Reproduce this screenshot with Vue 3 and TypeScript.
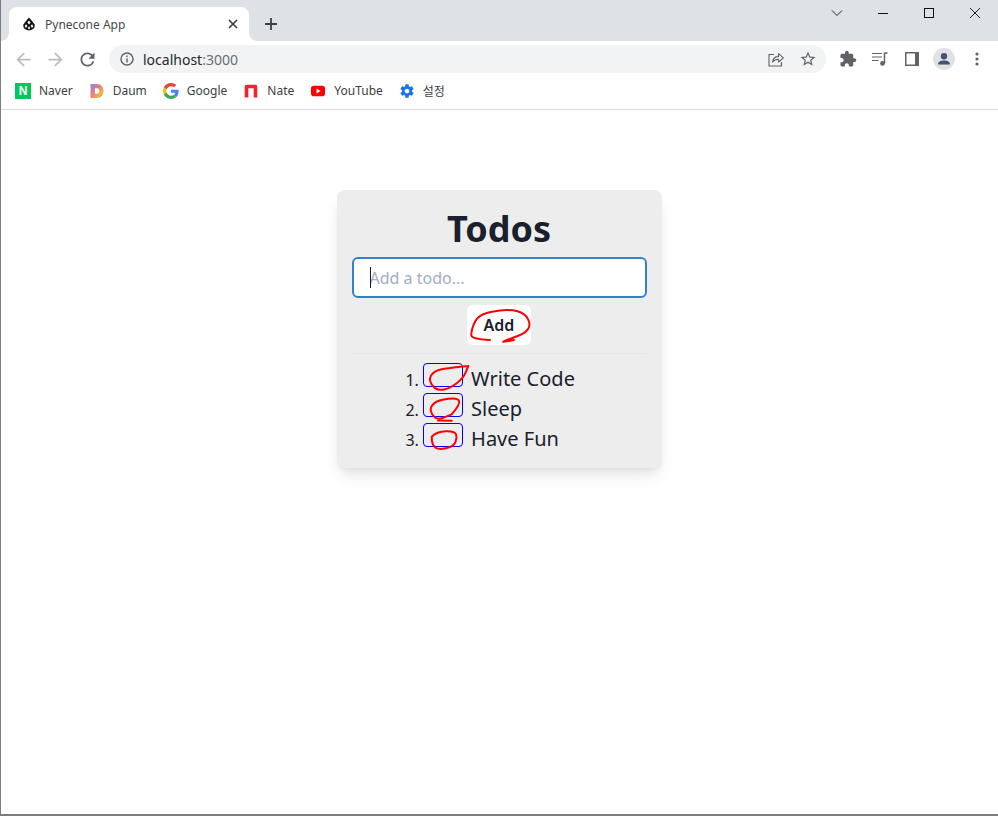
<script setup lang="ts">
type Pt = [number, number]

function smooth(points: Pt[]): string {
  let d = `M${points[0][0]} ${points[0][1]}`
  for (let i = 1; i < points.length - 1; i++) {
    const [x, y] = points[i]
    const [nx, ny] = points[i + 1]
    d += ` Q${x} ${y} ${(x + nx) / 2} ${(y + ny) / 2}`
  }
  const last = points[points.length - 1]
  return `${d} L${last[0]} ${last[1]}`
}

const scribbles: string[] = [
  smooth([[490, 340], [471.7, 339], [471, 331.7], [476.7, 316.7], [490, 311.7], [510, 309.3], [525, 313.3], [531, 325], [525, 333.3], [511.7, 338.3], [500, 342.7], [514, 340]]),
  smooth([[468.3, 366], [451.7, 367.7], [436.7, 370], [429.3, 376.7], [431, 385], [438.3, 390.7], [450, 388.3], [463.3, 378.3], [468.3, 366]]),
  smooth([[438, 420.5], [451.7, 420.7]]),
  smooth([[451.7, 414.3], [460, 405], [458.3, 397.7], [438.3, 400], [430, 406.7], [431.7, 415], [438.3, 420], [451.7, 414.3]]),
  smooth([[431.7, 436.7], [436.7, 431.7], [455, 431], [457.3, 438.3], [453.3, 446.7], [438.3, 450], [432.3, 445], [431.7, 436.7]]),
]

const todos: string[] = ['Write Code', 'Sleep', 'Have Fun']
</script>

<template>
  <div class="window">
    <header class="tabstrip">
      <div class="tab">
        <svg class="favicon" width="14" height="14" viewBox="0 0 14 14">
          <path d="M7 0.5 L10 4 L12.6 7.6 Q13.6 12.8 7 13.5 Q0.4 12.8 1.4 7.6 L4 4 Z" fill="#111" />
          <path d="M7 3.4 L8.6 5.6 L7 7.4 L5.4 5.6 Z M3.8 7.2 L5.4 8.8 L4 11 L2.8 9.4 Z M10.2 7.2 L11.2 9.4 L10 11 L8.6 8.8 Z M7 9.2 L8.2 11 L7 12.4 L5.8 11 Z" fill="#fff" />
        </svg>
        <span class="tab-title">Pynecone App</span>
        <svg class="tab-close" width="10" height="10" viewBox="0 0 10 10">
          <path d="M1 1 L9 9 M9 1 L1 9" stroke="#3c4043" stroke-width="1.7" />
        </svg>
      </div>
      <svg class="newtab" width="14" height="14" viewBox="0 0 14 14">
        <path d="M7 1 V13 M1 7 H13" stroke="#3c4043" stroke-width="1.8" />
      </svg>
      <div class="window-controls">
        <svg width="12" height="12" viewBox="0 0 12 12"><path d="M1 3.5 L6 8.5 L11 3.5" fill="none" stroke="#222" /></svg>
        <svg width="12" height="12" viewBox="0 0 12 12"><path d="M1 6.5 H11" stroke="#111" /></svg>
        <svg width="12" height="12" viewBox="0 0 12 12"><rect x="1.5" y="1.5" width="9" height="9" fill="none" stroke="#111" /></svg>
        <svg width="12" height="12" viewBox="0 0 12 12"><path d="M1 1 L11 11 M11 1 L1 11" stroke="#222" /></svg>
      </div>
    </header>

    <nav class="toolbar">
      <div class="nav-buttons">
        <svg width="21" height="21" viewBox="0 0 24 24"><path fill="#babcbe" d="M20 11H7.83l5.59-5.59L12 4l-8 8 8 8 1.41-1.41L7.83 13H20v-2z" /></svg>
        <svg width="21" height="21" viewBox="0 0 24 24"><path fill="#babcbe" d="M4 11h12.17l-5.59-5.59L12 4l8 8-8 8-1.41-1.41L16.17 13H4v-2z" /></svg>
        <svg width="21" height="21" viewBox="0 0 24 24"><path fill="#5f6368" d="M17.65 6.35A7.958 7.958 0 0 0 12 4c-4.42 0-7.99 3.58-7.99 8s3.57 8 7.99 8c3.73 0 6.84-2.55 7.73-6h-2.08A5.99 5.99 0 0 1 12 18c-3.31 0-6-2.69-6-6s2.69-6 6-6c1.66 0 3.14.69 4.22 1.78L13 11h7V4l-2.35 2.35z" /></svg>
      </div>
      <div class="omnibox">
        <svg width="14" height="14" viewBox="0 0 14 14">
          <circle cx="7" cy="7" r="6" fill="none" stroke="#5f6368" stroke-width="1.4" />
          <path d="M7 6.2 V10.4 M7 3.6 V5" stroke="#5f6368" stroke-width="1.4" />
        </svg>
        <span class="url"><span class="host">localhost</span>:3000</span>
        <svg class="omni-share" width="16" height="16" viewBox="0 0 16 16">
          <path d="M6 3.5 H1 V15 H13.5 V11" fill="none" stroke="#5f6368" stroke-width="1.1" />
          <path d="M4.5 11 C5 7.5 7.5 5.6 10.5 5.6 V2.6 L15.4 6.9 L10.5 11 V8.2 C8 8.2 6 9 4.5 11 Z" fill="none" stroke="#5f6368" stroke-width="1.1" stroke-linejoin="round" />
        </svg>
        <svg class="omni-star" width="18" height="18" viewBox="0 0 24 24"><path fill="#5f6368" d="M22 9.24l-7.19-.62L12 2 9.19 8.63 2 9.24l5.46 4.73L5.82 21 12 17.27 18.18 21l-1.63-7.03L22 9.24zM12 15.4l-3.76 2.27 1-4.28-3.32-2.88 4.38-.38L12 6.1l1.71 4.04 4.38.38-3.32 2.88 1 4.28L12 15.4z" /></svg>
      </div>
      <div class="actions">
        <svg width="18" height="18" viewBox="0 0 24 24"><path fill="#5f6368" d="M20.5 11H19V7c0-1.1-.9-2-2-2h-4V3.5C13 2.12 11.88 1 10.5 1S8 2.12 8 3.5V5H4c-1.1 0-1.99.9-1.99 2v3.8H3.5c1.49 0 2.7 1.21 2.7 2.7s-1.21 2.7-2.7 2.7H2V20c0 1.1.9 2 2 2h3.8v-1.5c0-1.49 1.21-2.7 2.7-2.7 1.49 0 2.7 1.21 2.7 2.7V22H17c1.1 0 2-.9 2-2v-4h1.5c1.38 0 2.5-1.12 2.5-2.5S21.88 11 20.5 11z" /></svg>
        <svg width="18" height="18" viewBox="0 0 18 18">
          <path d="M1 3.5 H11 M1 7 H11 M1 10.5 H7.5" stroke="#5f6368" stroke-width="1.2" />
          <path d="M13.5 3 H16.5 M13.5 2.6 V13" stroke="#5f6368" stroke-width="1.5" fill="none" />
          <circle cx="11.5" cy="13.4" r="2.3" fill="#5f6368" />
        </svg>
        <svg width="18" height="18" viewBox="0 0 18 18">
          <rect x="2" y="2" width="14" height="14" fill="#5f6368" />
          <rect x="3.5" y="3.5" width="8.5" height="11" fill="#fff" />
        </svg>
        <svg width="22" height="22" viewBox="0 0 22 22">
          <circle cx="11" cy="11" r="11" fill="#dee1e6" />
          <circle cx="11" cy="8.2" r="3.2" fill="#46536e" />
          <path d="M5 16.5 C5 13.6 8 12.6 11 12.6 C14 12.6 17 13.6 17 16.5 Z" fill="#46536e" />
        </svg>
        <svg width="18" height="18" viewBox="0 0 18 18">
          <circle cx="9" cy="4" r="1.6" fill="#5f6368" />
          <circle cx="9" cy="9" r="1.6" fill="#5f6368" />
          <circle cx="9" cy="14" r="1.6" fill="#5f6368" />
        </svg>
      </div>
    </nav>

    <div class="bookmarks">
      <div class="bookmark">
        <svg width="16" height="16" viewBox="0 0 16 16">
          <rect width="16" height="16" fill="#03c75a" />
          <text x="8" y="12.4" text-anchor="middle" class="naver-n">N</text>
        </svg>
        <span>Naver</span>
      </div>
      <div class="bookmark">
        <svg width="16" height="16" viewBox="0 0 16 16">
          <defs>
            <linearGradient id="daum" x1="0" y1="0" x2="1" y2="1">
              <stop offset="0" stop-color="#7a8cf0" />
              <stop offset="0.45" stop-color="#f27c7c" />
              <stop offset="0.75" stop-color="#f9b43c" />
              <stop offset="1" stop-color="#43b5e8" />
            </linearGradient>
          </defs>
          <path fill-rule="evenodd" fill="url(#daum)" d="M1.5 1 H8 C12 1 14.5 4 14.5 8 C14.5 12 12 15 8 15 H1.5 Z M6 5.2 V10.8 H8 C9.8 10.8 10.4 9.4 10.4 8 C10.4 6.6 9.8 5.2 8 5.2 Z" />
        </svg>
        <span>Daum</span>
      </div>
      <div class="bookmark">
        <svg width="16" height="16" viewBox="0 0 48 48">
          <path fill="#EA4335" d="M24 9.5c3.54 0 6.71 1.22 9.21 3.6l6.85-6.85C35.9 2.38 30.47 0 24 0 14.62 0 6.51 5.38 2.56 13.22l7.98 6.19C12.43 13.72 17.74 9.5 24 9.5z" />
          <path fill="#4285F4" d="M46.98 24.55c0-1.57-.15-3.09-.38-4.55H24v9.02h12.94c-.58 2.96-2.26 5.48-4.78 7.18l7.73 6c4.51-4.18 7.09-10.36 7.09-17.65z" />
          <path fill="#FBBC05" d="M10.53 28.59c-.48-1.45-.76-2.99-.76-4.59s.27-3.14.76-4.59l-7.98-6.19C.92 16.46 0 20.12 0 24c0 3.88.92 7.54 2.56 10.78l7.97-6.19z" />
          <path fill="#34A853" d="M24 48c6.48 0 11.93-2.13 15.89-5.81l-7.73-6c-2.15 1.45-4.92 2.3-8.16 2.3-6.26 0-11.57-4.22-13.47-9.91l-7.98 6.19C6.51 42.62 14.62 48 24 48z" />
        </svg>
        <span>Google</span>
      </div>
      <div class="bookmark">
        <svg width="16" height="16" viewBox="0 0 16 16">
          <path d="M3.5 14.5 V3.5 H12.5 V14.5" fill="none" stroke="#f8212b" stroke-width="3.6" stroke-linejoin="round" />
        </svg>
        <span>Nate</span>
      </div>
      <div class="bookmark">
        <svg width="16" height="16" viewBox="0 0 16 16">
          <rect x="1" y="2.8" width="14" height="10.4" rx="2.8" fill="#f00" />
          <path d="M6.5 5.6 L10.6 8 L6.5 10.4 Z" fill="#fff" />
        </svg>
        <span>YouTube</span>
      </div>
      <div class="bookmark">
        <svg width="16" height="16" viewBox="0 0 24 24"><path fill="#1a73e8" d="M19.43 12.98c.04-.32.07-.64.07-.98s-.03-.66-.07-.98l2.11-1.65c.19-.15.24-.42.12-.64l-2-3.46c-.12-.22-.39-.3-.61-.22l-2.49 1c-.52-.4-1.08-.73-1.69-.98l-.38-2.65A.488.488 0 0 0 14 2h-4c-.25 0-.46.18-.49.42l-.38 2.65c-.61.25-1.17.59-1.69.98l-2.49-1c-.23-.09-.49 0-.61.22l-2 3.46c-.13.22-.07.49.12.64l2.11 1.65c-.04.32-.07.65-.07.98s.03.66.07.98l-2.11 1.65c-.19.15-.24.42-.12.64l2 3.46c.12.22.39.3.61.22l2.49-1c.52.4 1.08.73 1.69.98l.38 2.65c.03.24.24.42.49.42h4c.25 0 .46-.18.49-.42l.38-2.65c.61-.25 1.17-.59 1.69-.98l2.49 1c.23.09.49 0 .61-.22l2-3.46c.12-.22.07-.49-.12-.64l-2.11-1.65zM12 15.5c-1.93 0-3.5-1.57-3.5-3.5s1.57-3.5 3.5-3.5 3.5 1.57 3.5 3.5-1.57 3.5-3.5 3.5z" /></svg>
        <span>설정</span>
      </div>
    </div>

    <main class="page">
      <section class="card">
        <h1 class="title">Todos</h1>
        <div class="input-wrap">
          <input class="todo-input" type="text" placeholder="Add a todo..." />
          <span class="caret"></span>
        </div>
        <button class="add-btn" type="button">Add</button>
        <hr class="divider" />
        <ol class="list">
          <li v-for="todo in todos" :key="todo" class="item">
            <button class="check" type="button"></button><span class="todo-text">{{ todo }}</span>
          </li>
        </ol>
        <svg class="scribbles" width="325" height="278" viewBox="337 190 325 278">
          <path v-for="(d, i) in scribbles" :key="i" :d="d" fill="none" stroke="#f00" stroke-width="2" stroke-linecap="round" stroke-linejoin="round" />
        </svg>
      </section>
    </main>
  </div>
</template>

<style scoped>
.window {
  width: 998px;
  height: 816px;
  box-sizing: border-box;
  display: flex;
  flex-direction: column;
  background: #fff;
  border-left: 1px solid #7d7d7d;
  border-bottom: 2px solid #7d7d7d;
  font-family: "Noto Sans", "Noto Sans CJK KR", sans-serif;
  overflow: hidden;
}
.tabstrip {
  height: 41px;
  flex: none;
  display: flex;
  align-items: flex-end;
  background: #dee1e6;
  position: relative;
  padding-left: 8px;
}
.tab {
  width: 240px;
  height: 34px;
  box-sizing: border-box;
  background: #fff;
  border-radius: 8px 8px 0 0;
  display: flex;
  align-items: center;
  padding: 0 11px 0 13px;
  position: relative;
}
.tab::before,
.tab::after {
  content: "";
  position: absolute;
  bottom: 0;
  width: 8px;
  height: 8px;
}
.tab::before {
  left: -8px;
  background: radial-gradient(circle at 0 0, #dee1e6 7.5px, #fff 8px);
}
.tab::after {
  right: -8px;
  background: radial-gradient(circle at 100% 0, #dee1e6 7.5px, #fff 8px);
}
.favicon {
  flex: none;
}
.tab-title {
  margin-left: 9px;
  font-size: 12px;
  color: #45494d;
  flex: 1;
}
.newtab {
  margin: 0 0 10px 15px;
}
.window-controls {
  position: absolute;
  right: 17px;
  top: 7px;
  display: flex;
  gap: 34px;
}
.toolbar {
  height: 36px;
  flex: none;
  display: flex;
  align-items: center;
  background: #fff;
  padding-left: 12px;
}
.nav-buttons {
  display: flex;
  gap: 11px;
  width: 96px;
  flex: none;
}
.omnibox {
  width: 717px;
  height: 28px;
  box-sizing: border-box;
  flex: none;
  background: #f1f3f4;
  border-radius: 14px;
  display: flex;
  align-items: center;
  padding-left: 11px;
}
.url {
  margin-left: 9px;
  font-size: 14px;
  color: #6b6f74;
  flex: 1;
}
.host {
  color: #26282b;
}
.omni-star {
  margin: 0 9px 0 15px;
}
.actions {
  display: flex;
  align-items: center;
  gap: 14px;
  padding-left: 13px;
}
.actions svg:nth-child(4) {
  margin: 0 -2px;
}
.actions svg:nth-child(5) {
  margin-left: 1px;
}
.bookmarks {
  height: 33px;
  flex: none;
  box-sizing: border-box;
  display: flex;
  align-items: center;
  gap: 16px;
  padding: 0 0 5px 14px;
  background: #fff;
  border-bottom: 1px solid #d9dbdd;
}
.bookmark {
  display: flex;
  align-items: center;
  gap: 8px;
  font-size: 12px;
  color: #3c4043;
}
.naver-n {
  fill: #fff;
  font-family: "Liberation Sans", sans-serif;
  font-weight: 700;
  font-size: 12px;
}
.page {
  flex: 1;
  display: flex;
  justify-content: center;
  align-items: flex-start;
  padding-top: 80px;
  background: #fff;
}
.card {
  width: 325px;
  height: 278px;
  box-sizing: border-box;
  margin-right: 1px;
  padding: 15px;
  background: #ededed;
  border-radius: 8px;
  box-shadow: 0 4px 6px -1px rgba(0, 0, 0, 0.1), 0 2px 4px -1px rgba(0, 0, 0, 0.06);
  box-shadow: 0 10px 15px -3px rgba(0, 0, 0, 0.1), 0 4px 6px -2px rgba(0, 0, 0, 0.05);
  display: flex;
  flex-direction: column;
  align-items: center;
  position: relative;
  color: #1a202c;
}
.title {
  margin: 0;
  height: 52px;
  line-height: 48px;
  font-size: 36px;
  font-weight: 700;
}
.input-wrap {
  position: relative;
  width: 100%;
}
.todo-input {
  display: block;
  width: 100%;
  height: 41px;
  box-sizing: border-box;
  border: 2px solid #3182ce;
  border-radius: 6px;
  padding: 0 16px;
  background: #fff;
  outline: none;
  font: inherit;
  font-size: 16px;
  color: #1a202c;
}
.todo-input::placeholder {
  color: #a0aec0;
  opacity: 1;
}
.caret {
  position: absolute;
  left: 18px;
  top: 10px;
  width: 1px;
  height: 21px;
  background: #1a202c;
}
.add-btn {
  margin-top: 7px;
  width: 64px;
  height: 40px;
  border: 0;
  border-radius: 6px;
  background: #fff;
  font: inherit;
  font-size: 16px;
  font-weight: 600;
  color: #1a202c;
  padding: 0;
}
.divider {
  width: 100%;
  margin: 8px 0 0;
  border: 0;
  border-top: 1px solid #e6e6e6;
}
.list {
  margin: 9px 0 0;
  padding: 0;
  width: fit-content;
  list-style: decimal;
  font-size: 16px;
}
.item {
  height: 30px;
  white-space: nowrap;
}
.check {
  display: inline-block;
  width: 40px;
  height: 24px;
  margin: 0 8px 0 0;
  padding: 0;
  box-sizing: border-box;
  border: 1px solid #0000ff;
  border-radius: 4px;
  background: transparent;
}
.todo-text {
  font-size: 20px;
}
.scribbles {
  position: absolute;
  left: 0;
  top: 0;
  pointer-events: none;
  overflow: visible;
}
</style>
